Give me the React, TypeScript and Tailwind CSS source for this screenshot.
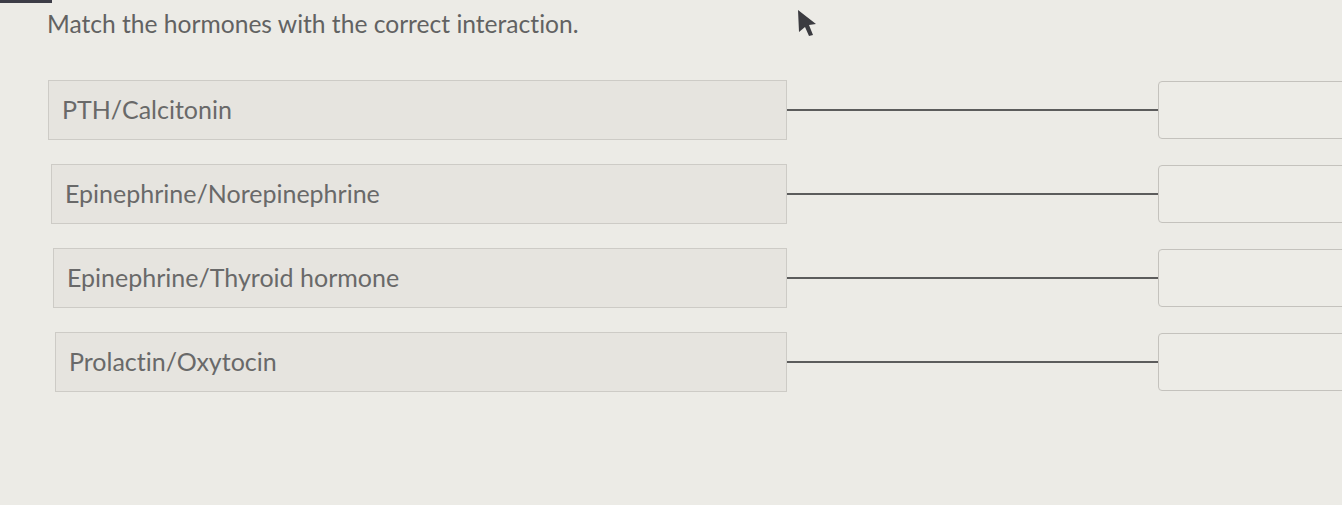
import React from "react";

const rows = [
  { label: "PTH/Calcitonin", ml: "ml-[48px]" },
  { label: "Epinephrine/Norepinephrine", ml: "ml-[51px]" },
  { label: "Epinephrine/Thyroid hormone", ml: "ml-[53px]" },
  { label: "Prolactin/Oxytocin", ml: "ml-[55px]" },
];

export default function App() {
  return (
    <div
      className="relative w-[1342px] h-[505px] overflow-hidden bg-[#ecebe6] [font-variant-ligatures:none]"
      style={{ fontFamily: "Lato, 'Open Sans', sans-serif" }}
    >
      <div className="absolute left-0 top-0 h-[3px] w-[52px] bg-[#3d3d47]" />
      <svg
        className="absolute left-[794px] top-[7px]"
        width="28"
        height="32"
        viewBox="0 0 28 32"
      >
        <path d="M4 3 L22 17 L15 18 L19 28 L15 29 L11 20 L5 25 Z" fill="#3b3b40" />
      </svg>
      <div className="pt-[8px] pl-[47px] text-[24.6px] leading-[32px] text-[#626262]">
        Match the hormones with the correct interaction.
      </div>
      <div className="mt-[40px] flex flex-col gap-[24px]">
        {rows.map((r) => (
          <div key={r.label} className={`flex items-center h-[60px] ${r.ml}`}>
            <div className="h-full flex-1 flex items-center border border-[#cdcbc6] bg-[#e6e4df] pl-[13px] text-[25px] text-[#696969]">
              {r.label}
            </div>
            <div className="w-[371px] h-[2px] bg-[#5c5c5c]" />
            <div className="h-[58px] w-[188px] -mr-[4px] rounded-[4px] border border-[#c4c2bd] bg-[#edece7]" />
          </div>
        ))}
      </div>
    </div>
  );
}
